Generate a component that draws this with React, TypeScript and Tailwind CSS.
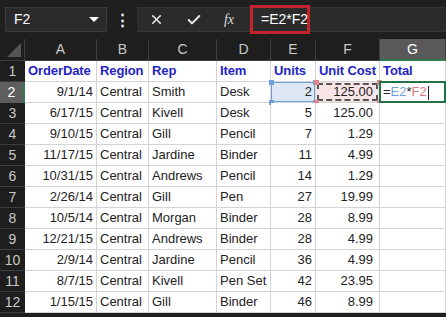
import { X, Check } from "lucide-react";

const cols = ["A", "B", "C", "D", "E", "F", "G"];

const rows: [string, string, string, string, string, string][] = [
  ["9/1/14", "Central", "Smith", "Desk", "2", "125.00"],
  ["6/17/15", "Central", "Kivell", "Desk", "5", "125.00"],
  ["9/10/15", "Central", "Gill", "Pencil", "7", "1.29"],
  ["11/17/15", "Central", "Jardine", "Binder", "11", "4.99"],
  ["10/31/15", "Central", "Andrews", "Pencil", "14", "1.29"],
  ["2/26/14", "Central", "Gill", "Pen", "27", "19.99"],
  ["10/5/14", "Central", "Morgan", "Binder", "28", "8.99"],
  ["12/21/15", "Central", "Andrews", "Binder", "28", "4.99"],
  ["2/9/14", "Central", "Jardine", "Pencil", "36", "4.99"],
  ["8/7/15", "Central", "Kivell", "Pen Set", "42", "23.95"],
  ["1/15/15", "Central", "Gill", "Binder", "46", "8.99"],
];

const headers = ["OrderDate", "Region", "Rep", "Item", "Units", "Unit Cost", "Total"];

const gridCols = "grid grid-cols-[25px_72px_52px_68px_54px_45px_64px_66px]";
const cell = "h-[21px] border-r border-b border-[#d4d4d4] bg-white px-[3px] flex items-center whitespace-nowrap overflow-hidden";

function Handle({ pos, color }: { pos: string; color: string }) {
  return <span className={`absolute w-[5px] h-[5px] ${pos} ${color}`} />;
}

export default function App() {
  return (
    <div className="w-[446px] h-[317px] overflow-hidden bg-[#1f1f1f] font-['Liberation_Sans',Arial,sans-serif]">
      {/* Formula bar */}
      <div className="h-[39px] flex items-center bg-[#1f1f1f]">
        <div className="ml-[5px] w-[102px] h-[25px] bg-[#2a2a2a] border border-[#3a3a3a] flex items-center justify-between pl-[8px] pr-[7px]">
          <span className="text-[14px] text-white">F2</span>
          <span className="w-0 h-0 border-l-[5px] border-r-[5px] border-t-[5px] border-l-transparent border-r-transparent border-t-white" />
        </div>
        <div className="w-[30px] flex justify-center text-white text-[15px] font-bold leading-none">⋮</div>
        <div className="h-[25px] flex-1 flex items-center bg-[#2b2b2b] border-y border-[#353535]">
          <div className="w-[38px] flex justify-center">
            <X size={15} strokeWidth={2.6} color="#e8e8e8" />
          </div>
          <div className="w-[38px] flex justify-center">
            <Check size={16} strokeWidth={3} color="#e8e8e8" />
          </div>
          <div className="w-[32px] flex justify-center text-[#dcdcdc] italic text-[14px] font-['Liberation_Serif',serif]">
            fx
          </div>
          <div className="ml-[5px] h-[29px] w-[60px] border-[3px] border-[#c4222c] flex items-center pl-[8px]">
            <span className="text-[14px] text-white">=E2*F2</span>
          </div>
        </div>
      </div>

      {/* Sheet */}
      <div className={gridCols}>
        {/* Column headers */}
        <div className="h-[22px] bg-[#1e1e1e] border-r border-b border-[#3e3e3e] flex items-end justify-end p-[3px]">
          <svg width="14" height="14" viewBox="0 0 14 14">
            <polygon points="14,0 14,14 0,14" fill="#555" />
          </svg>
        </div>
        {cols.map((c) => (
          <div
            key={c}
            className={`h-[22px] flex items-center justify-center text-[14px] border-r border-[#3e3e3e] ${
              c === "G"
                ? "bg-[#595959] text-white border-b-2 border-b-[#2e7d4f]"
                : "bg-[#1e1e1e] text-[#c8c8c8] border-b border-b-[#3e3e3e]"
            }`}
          >
            {c}
          </div>
        ))}

        {/* Row 1 */}
        <div className="h-[21px] bg-[#1e1e1e] border-b border-[#3e3e3e] flex items-center justify-center text-[14px] text-[#c8c8c8]">
          1
        </div>
        {headers.map((h) => (
          <div key={h} className={`${cell} text-[13px] font-bold text-[#2424c4] tracking-[-0.1px]`}>
            {h}
          </div>
        ))}

        {/* Data rows */}
        {rows.map((r, i) => {
          const n = i + 2;
          const sel = n === 2;
          return [
            <div
              key={`h${n}`}
              className={`h-[21px] border-b flex items-center justify-center text-[14px] ${
                sel
                  ? "bg-[#5e5e5e] text-white border-[#5e5e5e] border-r-2 border-r-[#2e7d4f]"
                  : "bg-[#1e1e1e] text-[#c8c8c8] border-[#3e3e3e]"
              }`}
            >
              {n}
            </div>,
            <div key={`a${n}`} className={`${cell} justify-end text-[13px] text-[#222]`}>{r[0]}</div>,
            <div key={`b${n}`} className={`${cell} text-[13px] text-[#222]`}>{r[1]}</div>,
            <div key={`c${n}`} className={`${cell} text-[13px] text-[#222]`}>{r[2]}</div>,
            <div key={`d${n}`} className={`${cell} text-[13px] text-[#222]`}>{r[3]}</div>,
            <div
              key={`e${n}`}
              className={`${cell} justify-end text-[13px] text-[#222] relative overflow-visible ${sel ? "!bg-[#dde7f5]" : ""}`}
            >
              {sel && (
                <>
                  <span className="absolute inset-0 border-[1.5px] border-[#6f9fd8]" />
                  <Handle pos="-left-[2px] -top-[2px]" color="bg-[#6f9fd8]" />
                  <Handle pos="-right-[3px] -top-[2px]" color="bg-[#6f9fd8]" />
                  <Handle pos="-left-[2px] -bottom-[3px]" color="bg-[#6f9fd8]" />
                  <Handle pos="-right-[3px] -bottom-[3px]" color="bg-[#6f9fd8]" />
                </>
              )}
              <span className="relative">{r[4]}</span>
            </div>,
            <div
              key={`f${n}`}
              className={`${cell} justify-end text-[13px] text-[#222] relative overflow-visible ${sel ? "!bg-[#f8e4e6]" : ""}`}
            >
              {sel && (
                <>
                  <span className="absolute inset-[1px] border-2 border-dashed border-[#555]" />
                  <Handle pos="-left-[2px] -top-[2px]" color="bg-[#e0838f]" />
                  <Handle pos="-right-[3px] -top-[2px]" color="bg-[#e0838f]" />
                  <Handle pos="-left-[2px] -bottom-[3px]" color="bg-[#e0838f]" />
                  <Handle pos="-right-[3px] -bottom-[3px]" color="bg-[#e0838f]" />
                </>
              )}
              <span className="relative pr-[3px]">{r[5]}</span>
            </div>,
            <div key={`g${n}`} className={`${cell} text-[13px] relative overflow-visible`}>
              {sel && (
                <>
                  <span className="absolute -left-[1px] -top-[1px] -right-[1px] -bottom-[1px] border-2 border-[#217346]" />
                  <span className="relative text-[#222]">
                    =<span className="text-[#6f9fd8]">E2</span>*<span className="text-[#d9798a]">F2</span>
                    <span className="inline-block w-[1px] h-[14px] bg-[#222] align-middle ml-[1px]" />
                  </span>
                </>
              )}
            </div>,
          ];
        })}
      </div>
    </div>
  );
}
